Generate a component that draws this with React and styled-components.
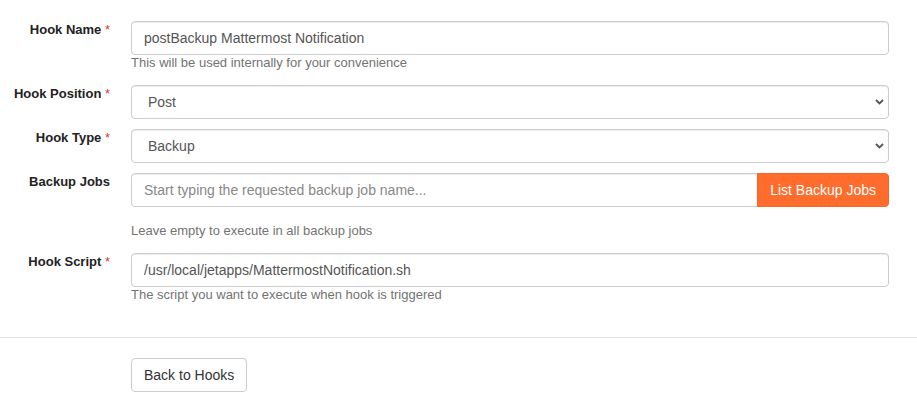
import React from "react";
import styled, { createGlobalStyle } from "styled-components";

const Global = createGlobalStyle`
  html, body { margin: 0; padding: 0; background: #fff; }
  body {
    font-family: "Liberation Sans", Arial, Helvetica, sans-serif;
    font-size: 14px;
    line-height: 1.42857;
    color: #333;
  }
  * { box-sizing: border-box; }
`;

const Page = styled.div`
  width: 917px;
`;

const Form = styled.form`
  padding: 21px 28px 35px 0;
`;

const Field = styled.div`
  display: grid;
  grid-template-columns: 110px 1fr;
  column-gap: 21px;
  margin-bottom: ${(p) => p.$gap}px;
`;

const Label = styled.label`
  text-align: right;
  font-size: 13px;
  font-weight: bold;
  color: #222;
  line-height: 18.5px;
  white-space: nowrap;
`;

const Req = styled.span`
  color: #e3342f;
  font-weight: normal;
`;

const Control = styled.div`
  min-width: 0;
`;

const Input = styled.input`
  display: block;
  width: 100%;
  height: 34px;
  padding: 6px 12px;
  font-family: inherit;
  font-size: 14px;
  color: #555;
  background: #fff;
  border: 1px solid #ccc;
  border-radius: ${(p) => (p.$grouped ? "4px 0 0 4px" : "4px")};
  box-shadow: inset 0 1px 1px rgba(0, 0, 0, 0.075);
  outline: none;
  &::placeholder { color: #888; }
`;

const SelectWrap = styled.div`
  position: relative;
`;

const Select = styled.select`
  display: block;
  width: 100%;
  height: 34px;
  padding: 6px 12px 6px 16px;
  font-family: inherit;
  font-size: 14px;
  color: #555;
  background: #fff;
  border: 1px solid #ccc;
  border-radius: 4px;
  box-shadow: inset 0 1px 1px rgba(0, 0, 0, 0.075);
  appearance: none;
  -webkit-appearance: none;
  outline: none;
`;

const Chevron = styled.svg`
  position: absolute;
  right: 5px;
  top: 14px;
  width: 9px;
  height: 6px;
  pointer-events: none;
`;

const Group = styled.div`
  display: flex;
`;

const OrangeButton = styled.button`
  flex: none;
  height: 34px;
  padding: 6px 12px;
  font-family: inherit;
  font-size: 14px;
  color: #fff;
  background: #ff6c2c;
  border: 1px solid #f8652a;
  border-radius: 0 4px 4px 0;
  margin-left: -1px;
  cursor: pointer;
`;

const Help = styled.p`
  margin: ${(p) => p.$top}px 0 0;
  font-size: 13px;
  line-height: 15px;
  color: #737373;
`;

const Footer = styled.div`
  border-top: 1px solid #e5e5e5;
  padding: 20px 0 0 131px;
`;

const DefaultButton = styled.button`
  height: 34px;
  padding: 6px 12px;
  font-family: inherit;
  font-size: 14px;
  color: #333;
  background: #fff;
  border: 1px solid #ccc;
  border-radius: 4px;
  cursor: pointer;
`;

const SelectField = ({ value, options }) => (
  <SelectWrap>
    <Select defaultValue={value}>
      {options.map((o) => (
        <option key={o}>{o}</option>
      ))}
    </Select>
    <Chevron viewBox="0 0 9 6">
      <path d="M1 1 L4.5 4.5 L8 1" fill="none" stroke="#555" strokeWidth="1.8" />
    </Chevron>
  </SelectWrap>
);

export default function App() {
  return (
    <Page>
      <Global />
      <Form onSubmit={(e) => e.preventDefault()}>
        <Field $gap={15}>
          <Label>
            Hook Name<Req> *</Req>
          </Label>
          <Control>
            <Input defaultValue="postBackup Mattermost Notification" />
            <Help $top={0}>This will be used internally for your convenience</Help>
          </Control>
        </Field>
        <Field $gap={10}>
          <Label>
            Hook Position<Req> *</Req>
          </Label>
          <Control>
            <SelectField value="Post" options={["Pre", "Post"]} />
          </Control>
        </Field>
        <Field $gap={10}>
          <Label>
            Hook Type<Req> *</Req>
          </Label>
          <Control>
            <SelectField value="Backup" options={["Backup", "Restore"]} />
          </Control>
        </Field>
        <Field $gap={15}>
          <Label>Backup Jobs</Label>
          <Control>
            <Group>
              <Input $grouped placeholder="Start typing the requested backup job name..." />
              <OrangeButton type="button">List Backup Jobs</OrangeButton>
            </Group>
            <Help $top={16}>Leave empty to execute in all backup jobs</Help>
          </Control>
        </Field>
        <Field $gap={0}>
          <Label>
            Hook Script<Req> *</Req>
          </Label>
          <Control>
            <Input defaultValue="/usr/local/jetapps/MattermostNotification.sh" />
            <Help $top={0}>The script you want to execute when hook is triggered</Help>
          </Control>
        </Field>
      </Form>
      <Footer>
        <DefaultButton type="button">Back to Hooks</DefaultButton>
      </Footer>
    </Page>
  );
}
